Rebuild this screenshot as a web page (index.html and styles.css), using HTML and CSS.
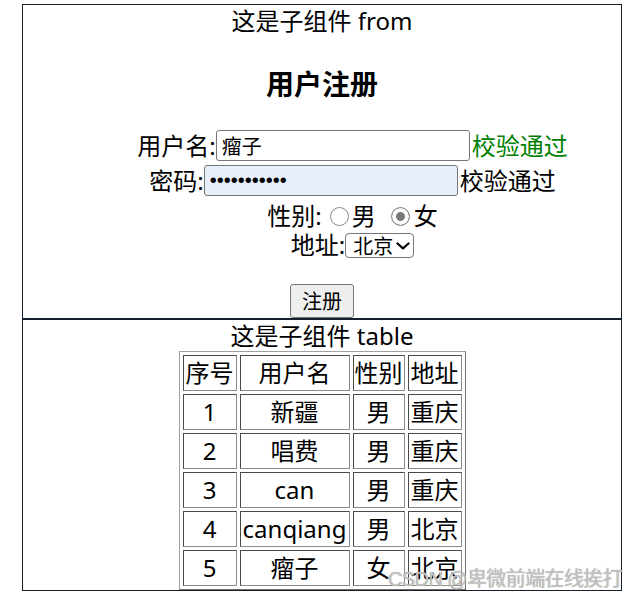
FILE: index.html
```html
<!DOCTYPE html>
<html lang="zh-CN">
<head>
<meta charset="utf-8">
<title>用户注册</title>
<link rel="stylesheet" href="styles.css">
</head>
<body>
<div class="page">
  <section class="panel panel-form">
    <div class="panel-title">这是子组件 from</div>
    <h3 class="form-heading">用户注册</h3>
    <form class="reg-form">
      <div class="row row-input">
        <label class="lbl" for="uname">用户名:</label>
        <input id="uname" class="field" type="text" value="瘤子">
        <span class="msg msg-ok">校验通过</span>
      </div>
      <div class="row row-input">
        <label class="lbl" for="pwd">密码:</label>
        <input id="pwd" class="field field-autofill" type="password" value="12345678901">
        <span class="msg">校验通过</span>
      </div>
      <div class="row row-radio">
        <span class="lbl">性别:</span>
        <input class="radio" type="radio" name="sex" id="sex-m"><label for="sex-m">男</label>
        <input class="radio radio-second" type="radio" name="sex" id="sex-f" checked><label for="sex-f">女</label>
      </div>
      <div class="row row-select">
        <label class="lbl" for="addr">地址:</label>
        <span class="select-wrap">
          <select id="addr" class="select"><option>北京</option><option>重庆</option></select>
          <svg class="chev" viewBox="0 0 14 8" aria-hidden="true"><polyline points="1.5,1.5 7,6.3 12.5,1.5" fill="none" stroke="#000" stroke-width="2.2" stroke-linecap="round" stroke-linejoin="round"/></svg>
        </span>
      </div>
      <div class="actions"><button type="button" class="btn">注册</button></div>
    </form>
  </section>
  <section class="panel panel-table">
    <div class="panel-title table-title">这是子组件 table</div>
    <table class="grid">
      <tr><td class="c1">序号</td><td class="c2">用户名</td><td class="c3">性别</td><td class="c4">地址</td></tr>
      <tr><td class="c1">1</td><td class="c2">新疆</td><td class="c3">男</td><td class="c4">重庆</td></tr>
      <tr><td class="c1">2</td><td class="c2">唱费</td><td class="c3">男</td><td class="c4">重庆</td></tr>
      <tr><td class="c1">3</td><td class="c2">can</td><td class="c3">男</td><td class="c4">重庆</td></tr>
      <tr><td class="c1">4</td><td class="c2">canqiang</td><td class="c3">男</td><td class="c4">北京</td></tr>
      <tr><td class="c1">5</td><td class="c2">瘤子</td><td class="c3">女</td><td class="c4">北京</td></tr>
    </table>
  </section>
  <div class="watermark">CSDN @卑微前端在线挨打</div>
</div>
</body>
</html>
```
FILE: styles.css
```css
* { box-sizing: border-box; }
html, body { margin: 0; padding: 0; background: #fff; }
body {
  font-family: "Noto Sans", "Noto Sans CJK SC", sans-serif;
  font-size: 24px;
  color: #000;
}
.page {
  position: relative;
  width: 636px;
  height: 603px;
  padding: 4px 0 0 22px;
  overflow: hidden;
}
.panel {
  width: 600px;
  border: 1px solid #13202c;
  text-align: center;
}
.panel-form { padding-bottom: 1px; }
.panel-title { height: 32px; line-height: 32px; }
.table-title { height: 31px; line-height: 31px; }
.form-heading {
  margin: 29px 0 27px;
  font-size: 28px;
  line-height: 37px;
  font-weight: 700;
}
.reg-form { margin: 0; }
.row {
  display: flex;
  justify-content: center;
  padding-left: 61px;
  white-space: nowrap;
}
.row-input { height: 35px; align-items: flex-start; }
.row-input .lbl, .row-input .msg { line-height: 31px; }
.field {
  width: 254px;
  height: 31px;
  margin: 0;
  padding: 0 5px;
  border: 1px solid #767676;
  border-radius: 3px;
  font-family: "Noto Sans CJK SC", sans-serif;
  font-size: 20px;
  color: #000;
  background: #fff;
  outline: none;
}
.field-autofill {
  background: #e8f0fe;
  font-family: "Liberation Sans", sans-serif;
}
.msg { margin-left: 2px; }
.msg-ok { color: #008000; }
.row-radio { height: 32px; align-items: center; line-height: 32px; }
.radio {
  appearance: none;
  -webkit-appearance: none;
  flex: none;
  width: 19px;
  height: 19px;
  margin: 0 3px 0 8px;
  border: 1px solid #8a8a8a;
  border-radius: 50%;
  background: #fff;
}
.radio-second { margin-left: 15px; margin-right: 4px; }
.radio:checked {
  background: #7a7a7a;
  box-shadow: inset 0 0 0 4px #fff;
  border-color: #8d8d8d;
}
.row-select { height: 30px; align-items: flex-start; }
.row-select .lbl { line-height: 26px; }
.select-wrap { position: relative; display: block; margin-top: 1px; }
.select {
  appearance: none;
  -webkit-appearance: none;
  display: block;
  width: 69px;
  height: 25px;
  margin: 0;
  padding: 0 0 0 7px;
  border: 1px solid #767676;
  border-radius: 4px;
  background: #fff;
  font-family: "Noto Sans CJK SC", sans-serif;
  font-size: 20px;
  line-height: 23px;
  color: #000;
}
.chev {
  position: absolute;
  left: 51px;
  top: 9px;
  width: 14px;
  height: 8px;
  pointer-events: none;
}
.actions { margin-top: 21px; height: 34px; }
.btn {
  width: 64px;
  height: 34px;
  padding: 0;
  border: 1px solid #767676;
  border-radius: 3px;
  background: #efefef;
  font-family: "Noto Sans CJK SC", sans-serif;
  font-size: 20px;
  color: #000;
}
.grid {
  margin: 0 auto;
  border-collapse: separate;
  border-spacing: 3px;
  border: 1px solid;
  border-color: #a0a0a0 #6e6e6e #6e6e6e #a0a0a0;
}
.grid td {
  padding: 1px;
  line-height: 32px;
  border: 1px solid;
  border-color: #4a4a4a #8a8a8a #8a8a8a #4a4a4a;
  text-align: center;
  white-space: nowrap;
}
.grid .c1 { width: 54px; }
.grid .c2 { width: 110px; }
.grid .c3 { width: 52px; }
.grid .c4 { width: 54px; }
.watermark {
  position: absolute;
  left: 388px;
  top: 566px;
  font-family: "Liberation Sans", "Noto Sans CJK SC", sans-serif;
  font-size: 20px;
  line-height: 26px;
  letter-spacing: -0.6px;
  color: #c2c2c2;
  text-shadow: 0 0 1px #9a9a9a;
  white-space: nowrap;
}
```
